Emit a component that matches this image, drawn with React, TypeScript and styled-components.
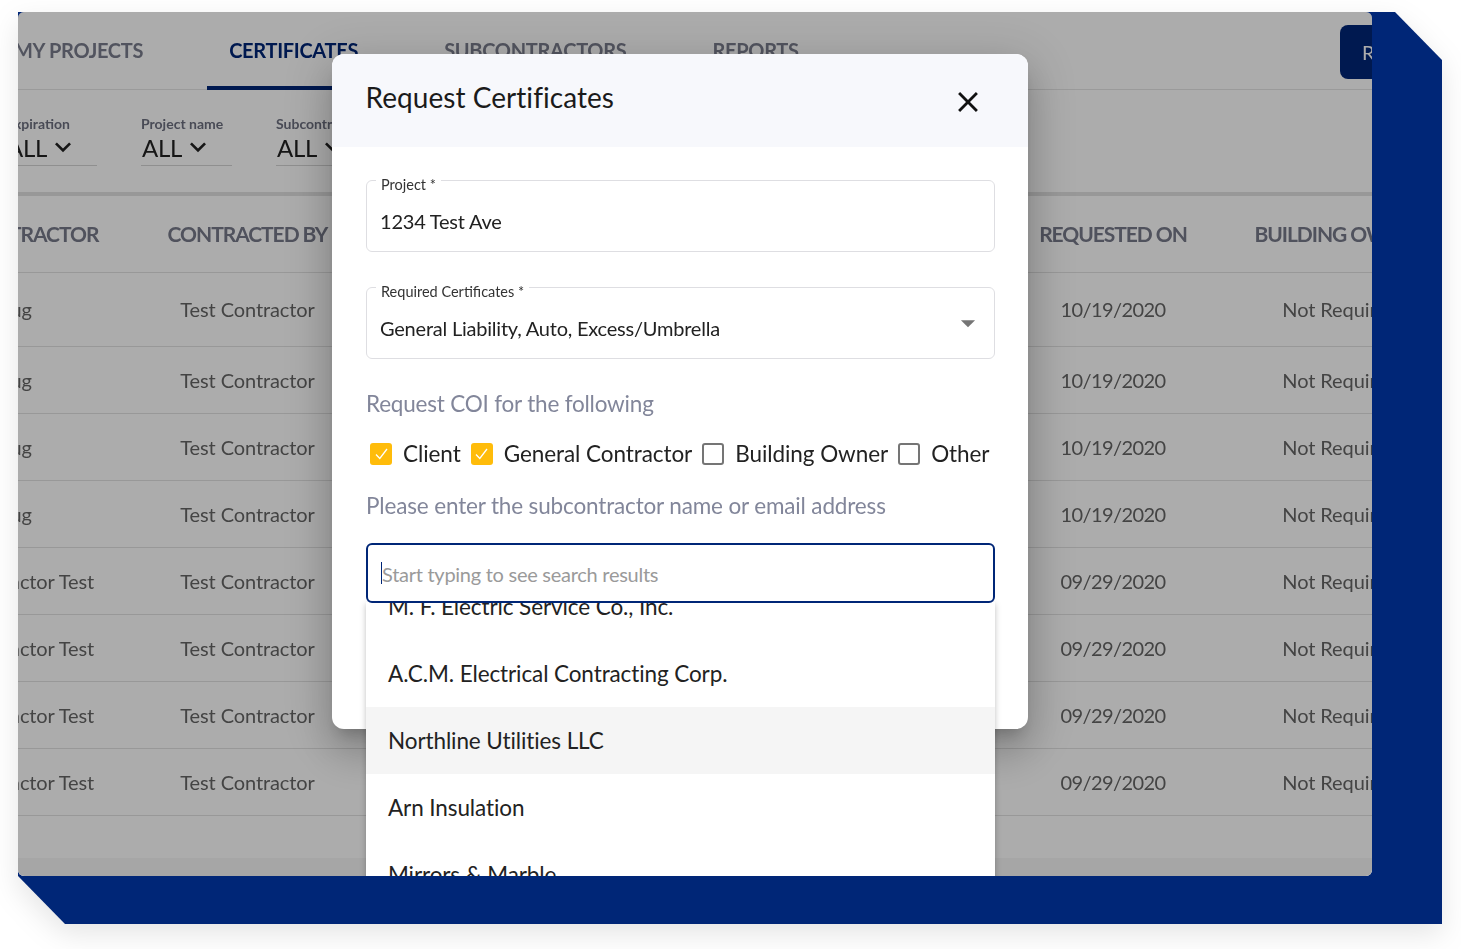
import React from 'react';
import styled, { createGlobalStyle } from 'styled-components';

const NAVY = '#002677';

const GlobalStyle = createGlobalStyle`
  html, body {
    margin: 0;
    padding: 0;
    background: #fff;
    font-family: Lato, "Open Sans", sans-serif;
  }
  * { box-sizing: border-box; }
`;

const tabs = ['MY PROJECTS', 'CERTIFICATES', 'SUBCONTRACTORS', 'REPORTS'];
const filters = ['Expiration', 'Project name', 'Subcontractor'];
const rows = [
  { name: 'Plug', date: '10/19/2020', tall: true },
  { name: 'Plug', date: '10/19/2020' },
  { name: 'Plug', date: '10/19/2020' },
  { name: 'Plug', date: '10/19/2020' },
  { name: 'Subcontractor Test', date: '09/29/2020' },
  { name: 'Subcontractor Test', date: '09/29/2020' },
  { name: 'Subcontractor Test', date: '09/29/2020' },
  { name: 'Subcontractor Test', date: '09/29/2020' },
];
const roles = [
  { label: 'Client', checked: true },
  { label: 'General Contractor', checked: true },
  { label: 'Building Owner', checked: false },
  { label: 'Other', checked: false },
];
const options = ['M. F. Electric Service Co., Inc.', 'A.C.M. Electrical Contracting Corp.', 'Northline Utilities LLC', 'Arn Insulation', 'Mirrors & Marble'];

const Chevron = () => (
  <svg width="32" height="32" viewBox="0 0 24 24" fill="#222">
    <path d="M7.41 8.59L12 13.17l4.59-4.58L18 10l-6 6-6-6 1.41-1.41z" />
  </svg>
);

const App: React.FC = () => {
  return (
    <Page>
      <GlobalStyle />
      <ShadowWrap>
        <Frame>
          <Screen>
            <Content>
              <TopBar>
                <Tabs>
                  {tabs.map((tab) => (
                    <Tab key={tab} $active={tab === 'CERTIFICATES'}>
                      {tab}
                    </Tab>
                  ))}
                </Tabs>
                <RequestButton>Request Certificates</RequestButton>
              </TopBar>
              <Filters>
                {filters.map((filter) => (
                  <Filter key={filter}>
                    <FilterLabel>{filter}</FilterLabel>
                    <FilterValue>
                      ALL
                      <Chevron />
                    </FilterValue>
                  </Filter>
                ))}
              </Filters>
              <HeadRow>
                <HeadCell>SUBCONTRACTOR</HeadCell>
                <HeadCell>CONTRACTED BY</HeadCell>
                <HeadCell />
                <HeadCell>REQUESTED ON</HeadCell>
                <HeadCell>BUILDING OWNER</HeadCell>
              </HeadRow>
              {rows.map((row, index) => (
                <BodyRow key={index} $tall={row.tall}>
                  <BodyCell>{row.name}</BodyCell>
                  <BodyCell>Test Contractor</BodyCell>
                  <BodyCell />
                  <DateCell>{row.date}</DateCell>
                  <BodyCell>Not Required</BodyCell>
                </BodyRow>
              ))}
              <Footer />
            </Content>
            <Overlay />
            <Modal>
              <ModalHeader>
                <ModalTitle>Request Certificates</ModalTitle>
                <CloseIcon width="34" height="34" viewBox="0 0 24 24" fill="#111">
                  <path d="M19 6.41L17.59 5 12 10.59 6.41 5 5 6.41 10.59 12 5 17.59 6.41 19 12 13.41 17.59 19 19 17.59 13.41 12z" />
                </CloseIcon>
              </ModalHeader>
              <ModalBody>
                <Field>
                  <FieldLabel>Project *</FieldLabel>
                  <FieldValue>1234 Test Ave</FieldValue>
                </Field>
                <Field>
                  <FieldLabel>Required Certificates *</FieldLabel>
                  <FieldValue>General Liability, Auto, Excess/Umbrella</FieldValue>
                  <SelectArrow width="34" height="34" viewBox="0 0 24 24" fill="#757575">
                    <path d="M7 10l5 5 5-5z" />
                  </SelectArrow>
                </Field>
                <SectionTitle>Request COI for the following</SectionTitle>
                <Roles>
                  {roles.map((role) => (
                    <Role key={role.label}>
                      <CheckBox $checked={role.checked}>
                        {role.checked && (
                          <svg width="13" height="12" viewBox="0 0 13 12" fill="none" stroke="#fff" strokeWidth="1.3">
                            <path d="M1 6.5L4.8 10.5L12 1" />
                          </svg>
                        )}
                      </CheckBox>
                      {role.label}
                    </Role>
                  ))}
                </Roles>
                <SearchTitle>Please enter the subcontractor name or email address</SearchTitle>
                <SearchWrap>
                  <SearchBox>
                    <TextCaret />
                    <Placeholder>Start typing to see search results</Placeholder>
                  </SearchBox>
                  <Dropdown>
                    <OptionList>
                      {options.map((option) => (
                        <Option key={option} $hover={option === 'Northline Utilities LLC'}>
                          {option}
                        </Option>
                      ))}
                    </OptionList>
                  </Dropdown>
                </SearchWrap>
              </ModalBody>
            </Modal>
          </Screen>
        </Frame>
      </ShadowWrap>
    </Page>
  );
};

export default App;

const Page = styled.div`
  width: 1461px;
  height: 949px;
  padding: 12px 0 0 18px;
  overflow: hidden;
`;

const ShadowWrap = styled.div`
  width: 1424px;
  height: 912px;
  filter: drop-shadow(0 10px 14px rgba(0, 0, 0, 0.1));
`;

const Frame = styled.div`
  width: 100%;
  height: 100%;
  background: ${NAVY};
  clip-path: polygon(0 0, 1377px 0, 100% 48px, 100% 100%, 47px 100%, 0 864px);
`;

const Screen = styled.div`
  position: relative;
  width: 1354px;
  height: 864px;
  overflow: hidden;
  background: #fff;
  border-radius: 6px;
`;

const Content = styled.div`
  width: 1700px;
  margin-left: -112px;
  display: flex;
  flex-direction: column;
`;

const TopBar = styled.div`
  display: flex;
  height: 78px;
  border-bottom: 1.5px solid #e4e4e4;
`;

const Tabs = styled.div`
  width: 1434px;
  display: flex;
  gap: 42px;
  padding-left: 86px;
`;

const Tab = styled.div<{ $active?: boolean }>`
  height: 78px;
  padding: 25px 22px 0;
  font-size: 20px;
  line-height: 26px;
  font-weight: 700;
  letter-spacing: -0.3px;
  white-space: nowrap;
  color: ${({ $active }) => ($active ? NAVY : '#7a7d8d')};
  border-bottom: ${({ $active }) => ($active ? `4px solid ${NAVY}` : 'none')};
`;

const RequestButton = styled.div`
  width: 240px;
  height: 54px;
  margin-top: 13px;
  padding: 14px 0 0 22px;
  font-size: 20px;
  line-height: 26px;
  color: #fff;
  white-space: nowrap;
  background: ${NAVY};
  border-radius: 8px;
`;

const Filters = styled.div`
  height: 106px;
  display: flex;
  gap: 44px;
  padding: 25px 0 0 100px;
  border-bottom: 4px solid #e2e2e2;
`;

const Filter = styled.div`
  width: 91px;
  height: 51px;
  flex-shrink: 0;
  border-bottom: 1.5px solid #d5d5d5;
`;

const FilterLabel = styled.div`
  font-size: 14px;
  line-height: 17px;
  font-weight: 700;
  color: #6d7080;
  white-space: nowrap;
`;

const FilterValue = styled.div`
  display: flex;
  align-items: center;
  height: 30px;
  padding-left: 1px;
  font-size: 24px;
  letter-spacing: -0.3px;
  color: #222;

  svg {
    flex-shrink: 0;
  }
`;

const columns = '214px 255px 638px 200px 254px';

const HeadRow = styled.div`
  display: grid;
  grid-template-columns: ${columns};
  height: 77px;
  border-bottom: 1.5px solid #e2e2e2;
`;

const HeadCell = styled.div`
  display: flex;
  align-items: center;
  justify-content: center;
  padding-bottom: 1px;
  font-size: 21px;
  font-weight: 700;
  letter-spacing: -1.05px;
  white-space: nowrap;
  color: #777a8a;
`;

const BodyRow = styled.div<{ $tall?: boolean }>`
  display: grid;
  grid-template-columns: ${columns};
  height: ${({ $tall }) => ($tall ? '74px' : '67px')};
  border-bottom: 1.5px solid #e2e2e2;
`;

const BodyCell = styled.div`
  display: flex;
  align-items: center;
  justify-content: center;
  padding-bottom: 1px;
  font-size: 20px;
  letter-spacing: -0.1px;
  white-space: nowrap;
  color: #666;
`;

const DateCell = styled(BodyCell)`
  letter-spacing: -0.6px;
`;

const Footer = styled.div`
  height: 61px;
  margin-top: 42px;
  background: #f6f6f6;
`;

const Overlay = styled.div`
  position: absolute;
  inset: 0;
  background: rgba(0, 0, 0, 0.325);
`;

const Modal = styled.div`
  position: absolute;
  left: 314px;
  top: 42px;
  width: 696px;
  height: 675px;
  background: #fff;
  border-radius: 12px;
  box-shadow: 0 11px 15px -7px rgba(0, 0, 0, 0.2), 0 24px 38px 3px rgba(0, 0, 0, 0.14), 0 9px 46px 8px rgba(0, 0, 0, 0.12);
`;

const ModalHeader = styled.div`
  height: 93px;
  display: flex;
  justify-content: space-between;
  padding: 25px 43px 0 33.5px;
  background: #f7f8fc;
  border-radius: 12px 12px 0 0;
`;

const ModalTitle = styled.div`
  font-size: 28px;
  line-height: 36px;
  letter-spacing: 0.05px;
  color: #1b1b1b;
`;

const CloseIcon = styled.svg`
  margin-top: 6px;
`;

const ModalBody = styled.div`
  padding: 33px 33px 0 34px;
`;

const Field = styled.div`
  position: relative;
  height: 72px;
  margin-bottom: 35px;
  padding: 27px 13px 0;
  border: 1.5px solid #dedee2;
  border-radius: 6px;
`;

const FieldLabel = styled.span`
  position: absolute;
  top: -4px;
  left: 9px;
  padding: 0 5px;
  font-size: 14.5px;
  line-height: 16px;
  color: #333;
  background: #fff;
`;

const FieldValue = styled.div`
  font-size: 20px;
  line-height: 26px;
  letter-spacing: -0.22px;
  color: #222;
`;

const SelectArrow = styled.svg`
  position: absolute;
  right: 9px;
  top: 18px;
`;

const SectionTitle = styled.div`
  margin-top: -5px;
  font-size: 22.5px;
  line-height: 30px;
  letter-spacing: -0.2px;
  color: #82869a;
`;

const Roles = styled.div`
  display: flex;
  align-items: center;
  height: 30px;
  margin-top: 20px;
  padding-left: 4px;
  gap: 10px;
`;

const Role = styled.div`
  display: flex;
  align-items: center;
  gap: 11px;
  font-size: 22.5px;
  line-height: 30px;
  letter-spacing: -0.07px;
  white-space: nowrap;
  color: #222;
`;

const CheckBox = styled.span<{ $checked?: boolean }>`
  width: 22px;
  height: 22px;
  display: flex;
  align-items: center;
  justify-content: center;
  background: ${({ $checked }) => ($checked ? '#ffbc0a' : '#fff')};
  border: ${({ $checked }) => ($checked ? 'none' : '2px solid #757575')};
  border-radius: 3px;
`;

const SearchTitle = styled.div`
  margin-top: 22px;
  font-size: 22.5px;
  line-height: 30px;
  letter-spacing: -0.15px;
  color: #82869a;
`;

const SearchWrap = styled.div`
  position: relative;
  margin-top: 22px;
`;

const SearchBox = styled.div`
  position: relative;
  z-index: 2;
  height: 60px;
  display: flex;
  align-items: center;
  padding-left: 13px;
  background: #fff;
  border: 2.5px solid ${NAVY};
  border-radius: 6px;
`;

const TextCaret = styled.span`
  width: 1px;
  height: 22px;
  background: ${NAVY};
`;

const Placeholder = styled.span`
  padding-top: 2px;
  font-size: 20px;
  line-height: 26px;
  letter-spacing: -0.27px;
  color: #9a9a9a;
`;

const Dropdown = styled.div`
  position: absolute;
  z-index: 1;
  left: 0;
  right: 0;
  top: 59px;
  height: 320px;
  overflow: hidden;
  background: #fff;
  box-shadow: 0 2px 6px rgba(0, 0, 0, 0.25);
`;

const OptionList = styled.div`
  margin-top: -29px;
`;

const Option = styled.div<{ $hover?: boolean }>`
  height: 67px;
  display: flex;
  align-items: center;
  padding: 0 0 1px 22px;
  font-size: 22.5px;
  letter-spacing: -0.1px;
  color: #222;
  background: ${({ $hover }) => ($hover ? '#f5f5f5' : '#fff')};
`;
